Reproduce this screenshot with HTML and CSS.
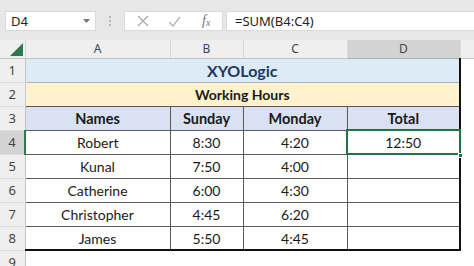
FILE: index.html
```html
<!DOCTYPE html>
<html lang="en">
<head>
    <meta charset="UTF-8">
    <title>Working Hours - XYOLogic</title>
    <link rel="stylesheet" href="styles.css">
</head>
<body>
    <div class="toolbar">
        <div class="name-box">
            <span>D4</span>
            <svg class="caret" width="7" height="4" viewBox="0 0 7 4"><path d="M0 0h7L3.5 4z" fill="#777"/></svg>
        </div>
        <div class="grip">
            <span></span><span></span><span></span>
        </div>
        <div class="fx-buttons">
            <svg width="12" height="12" viewBox="0 0 12 12"><path d="M1 1l10 10M11 1L1 11" stroke="#a8a8a8" stroke-width="1.3" fill="none"/></svg>
            <svg width="13" height="11" viewBox="0 0 13 11"><path d="M1 6l4 4 7-9" stroke="#b4b4b4" stroke-width="1.3" fill="none"/></svg>
            <span class="fx">f<sub>x</sub></span>
        </div>
        <div class="formula">=SUM(B4:C4)</div>
    </div>

    <table class="sheet">
        <colgroup>
            <col class="c-head">
            <col class="c-a">
            <col class="c-b">
            <col class="c-c">
            <col class="c-d">
            <col>
        </colgroup>
        <thead>
            <tr class="col-letters">
                <th class="corner"><span class="tri"></span></th>
                <th>A</th>
                <th>B</th>
                <th>C</th>
                <th class="active">D</th>
                <th class="blank"></th>
            </tr>
        </thead>
        <tbody>
            <tr>
                <th class="rn">1</th>
                <td colspan="4" class="title">XYOLogic</td>
                <td class="out"></td>
            </tr>
            <tr>
                <th class="rn">2</th>
                <td colspan="4" class="subtitle">Working Hours</td>
                <td class="out"></td>
            </tr>
            <tr class="heads">
                <th class="rn">3</th>
                <td>Names</td>
                <td>Sunday</td>
                <td>Monday</td>
                <td class="last">Total</td>
                <td class="out"></td>
            </tr>
            <tr>
                <th class="rn active">4</th>
                <td>Robert</td>
                <td>8:30</td>
                <td>4:20</td>
                <td class="last selected">12:50<span class="handle"></span></td>
                <td class="out"></td>
            </tr>
            <tr>
                <th class="rn">5</th>
                <td>Kunal</td>
                <td>7:50</td>
                <td>4:00</td>
                <td class="last"></td>
                <td class="out"></td>
            </tr>
            <tr>
                <th class="rn">6</th>
                <td>Catherine</td>
                <td>6:00</td>
                <td>4:30</td>
                <td class="last"></td>
                <td class="out"></td>
            </tr>
            <tr>
                <th class="rn">7</th>
                <td>Christopher</td>
                <td>4:45</td>
                <td>6:20</td>
                <td class="last"></td>
                <td class="out"></td>
            </tr>
            <tr class="end">
                <th class="rn">8</th>
                <td>James</td>
                <td>5:50</td>
                <td>4:45</td>
                <td class="last"></td>
                <td class="out"></td>
            </tr>
            <tr class="after">
                <th class="rn">9</th>
                <td></td><td></td><td></td><td></td><td></td>
            </tr>
        </tbody>
    </table>
</body>
</html>
```

FILE: styles.css
```css
* {
    margin: 0;
    padding: 0;
    box-sizing: border-box;
}

body {
    width: 474px;
    height: 266px;
    overflow: hidden;
    background: #fff;
    font-family: 'Noto Sans', 'Open Sans', sans-serif;
}

/* formula bar */
.toolbar {
    height: 40px;
    background: #e7e7e7;
    display: flex;
    align-items: flex-start;
    padding: 11px 0 0 5px;
}

.name-box {
    width: 91px;
    height: 20px;
    background: #fff;
    border: 1px solid #dadada;
    display: flex;
    align-items: center;
    justify-content: space-between;
    padding: 0 5px 0 5px;
    font-size: 13px;
    color: #222;
}

.grip {
    width: 28px;
    height: 20px;
    display: flex;
    flex-direction: column;
    align-items: center;
    justify-content: center;
    gap: 2px;
}

.grip span {
    width: 2px;
    height: 2px;
    background: #b5b5b5;
}

.fx-buttons {
    width: 99px;
    height: 20px;
    background: #fff;
    border: 1px solid #dadada;
    display: flex;
    align-items: center;
    padding-left: 12px;
    gap: 19px;
}

.fx {
    font-family: 'Liberation Serif', serif;
    font-style: italic;
    font-size: 14px;
    color: #777;
    margin-left: 2px;
}

.fx sub {
    font-size: 10px;
    vertical-align: -1px;
}

.formula {
    flex: 1;
    height: 20px;
    margin-left: 3px;
    background: #fff;
    border: 1px solid #dadada;
    border-right: none;
    padding-left: 8px;
    font-size: 13px;
    line-height: 18px;
    color: #222;
}

/* sheet grid */
.sheet {
    border-collapse: collapse;
    table-layout: fixed;
    width: 474px;
    font-family: 'Lato', 'Liberation Sans', sans-serif;
    font-size: 14px;
    color: #1a1a1a;
}

.c-head { width: 25px; }
.c-a { width: 145px; }
.c-b { width: 73px; }
.c-c { width: 104px; }
.c-d { width: 113px; }

.col-letters th {
    height: 18px;
    background: #efefef;
    border-bottom: 1px solid #c4c4c4;
    border-left: 1px solid #d9d9d9;
    font-family: 'Noto Sans', sans-serif;
    font-weight: normal;
    font-size: 12px;
    color: #444;
}

.col-letters th.active {
    background: #d3d3d3;
    border-bottom: 1px solid #9fb8a8;
}

.col-letters th.blank {
    border-left: 1px solid #d9d9d9;
}

.corner {
    position: relative;
    border-left: none !important;
}

.tri {
    position: absolute;
    right: 2px;
    bottom: 2px;
    width: 0;
    height: 0;
    border-left: 13px solid transparent;
    border-bottom: 13px solid #2c7a4b;
}

th.rn {
    height: 24px;
    background: #efefef;
    border-right: 1px solid #c4c4c4;
    border-bottom: 1px solid #dcdcdc;
    font-family: 'Noto Sans', sans-serif;
    font-weight: normal;
    font-size: 13px;
    color: #444;
    text-align: center;
}

th.rn.active {
    background: #d3d3d3;
    border-right: 2px solid #2d7a4c;
}

td {
    height: 24px;
    text-align: center;
    border: 1px solid #5a5a5a;
    padding-top: 1px;
}

td.out {
    border: none;
    background: #fff;
}

.title {
    background: #ddebf7;
    color: #203864;
    font-weight: bold;
    font-size: 16px;
    border-bottom: 1px solid #a9b4c0;
    border-right: 2px solid #111;
}

.subtitle {
    background: #fff2cc;
    font-weight: bold;
    border-top: 1px solid #a9b4c0;
    border-right: 2px solid #111;
}

.heads td {
    background: #d9e1f2;
    font-weight: bold;
    font-size: 14.5px;
}

.heads td.out {
    background: #fff;
}

td.last {
    border-right: 2px solid #111;
}

td.selected {
    position: relative;
    outline: 2px solid #217346;
    outline-offset: -1px;
}

.handle {
    position: absolute;
    right: -4px;
    bottom: -4px;
    width: 5px;
    height: 5px;
    background: #217346;
    border: 1px solid #fff;
}

.end td {
    border-bottom: 2px solid #111;
}

.end td.out {
    border-bottom: none;
}

.after td {
    border: none;
}
```
